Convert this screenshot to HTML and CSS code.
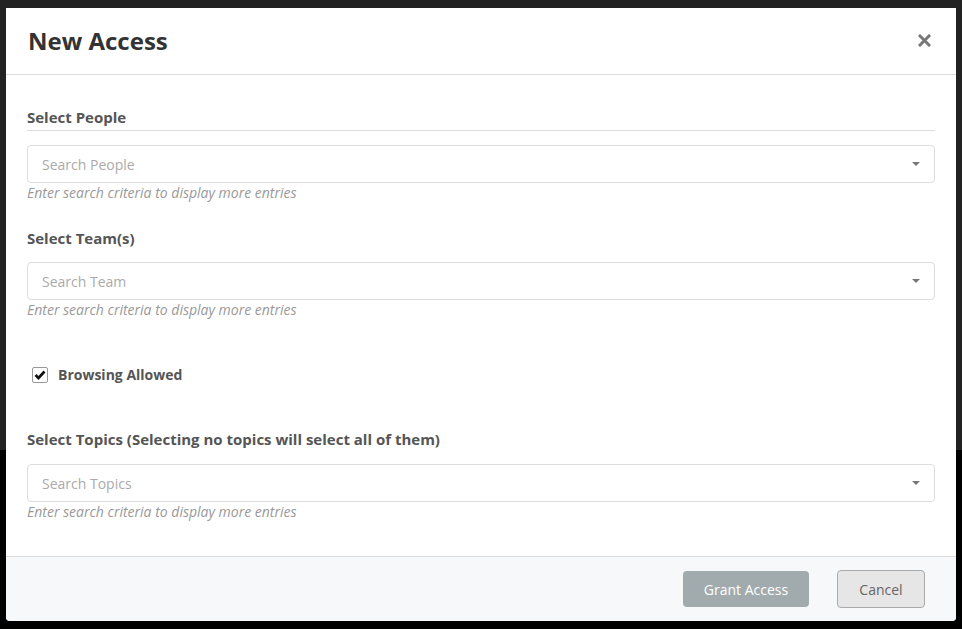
FILE: index.html
```html
<!DOCTYPE html>
<html>
<head>
  <title>New Access</title>
  <meta name="viewport" content="width=device-width, initial-scale=1">
  <link rel="stylesheet" href="styles.css">
</head>
<body>
  <!-- Backdrop behind the dialog -->
  <div class="backdrop">
    <div class="modal">

      <!-- Header -->
      <div class="modal-header">
        <h2 class="modal-title">New Access</h2>
        <button class="close-btn" aria-label="Close">
          <svg width="13" height="13" viewBox="0 0 13 13">
            <path d="M2 2 L11 11 M11 2 L2 11" stroke="#777" stroke-width="3" stroke-linecap="square"/>
          </svg>
        </button>
      </div>

      <!-- Body -->
      <div class="modal-body">
        <div class="form-group">
          <label class="group-label underlined">Select People</label>
          <div class="select-box">
            <span class="placeholder">Search People</span>
            <span class="caret"></span>
          </div>
          <div class="help">Enter search criteria to display more entries</div>
        </div>

        <div class="form-group">
          <label class="group-label">Select Team(s)</label>
          <div class="select-box">
            <span class="placeholder">Search Team</span>
            <span class="caret"></span>
          </div>
          <div class="help">Enter search criteria to display more entries</div>
        </div>

        <div class="check-row">
          <span class="checkbox">
            <svg width="12" height="10" viewBox="0 0 12 10">
              <path d="M1.5 5 L4.5 8 L10.5 1.5" fill="none" stroke="#111" stroke-width="2.6"/>
            </svg>
          </span>
          <span class="check-label">Browsing Allowed</span>
        </div>

        <div class="form-group">
          <label class="group-label topics">Select Topics (Selecting no topics will select all of them)</label>
          <div class="select-box">
            <span class="placeholder">Search Topics</span>
            <span class="caret"></span>
          </div>
          <div class="help">Enter search criteria to display more entries</div>
        </div>
      </div>

      <!-- Footer -->
      <div class="modal-footer">
        <button class="btn btn-grant">Grant Access</button>
        <button class="btn btn-cancel">Cancel</button>
      </div>

    </div>
  </div>
</body>
</html>
```

FILE: styles.css
```css
/* Page and backdrop */
body {
  margin: 0;
  font-family: "Open Sans", "Liberation Sans", sans-serif;
  background: #000;
}

.backdrop {
  height: 629px;
  padding-top: 8px;
  box-sizing: border-box;
  background: linear-gradient(#222 0, #222 450px, #000 450px);
}

/* The dialog */
.modal {
  margin-left: 6px;
  width: 950px;
  height: 613px;
  background: #fff;
  border-radius: 0 0 4px 4px;
  display: flex;
  flex-direction: column;
  overflow: hidden;
}

.modal-header {
  height: 66px;
  flex-shrink: 0;
  border-bottom: 1px solid #dcdcdc;
  display: flex;
  align-items: center;
  justify-content: space-between;
  padding: 0 25px 0 22px;
}

.modal-title {
  margin: 0 0 1px 0;
  font-size: 24px;
  font-weight: 700;
  color: #333;
}

.close-btn {
  background: none;
  border: none;
  padding: 0;
  margin-top: -2px;
  cursor: pointer;
  display: flex;
}

.modal-body {
  flex: 1;
  padding: 32px 21px 0 21px;
}

/* Form groups */
.form-group {
  margin-bottom: 25px;
}

.group-label {
  display: block;
  font-size: 15px;
  font-weight: 700;
  color: #555;
  line-height: 20px;
  margin-bottom: 14px;
}

.group-label.underlined {
  padding-bottom: 3px;
  border-bottom: 1px solid #ddd;
}

.group-label.topics {
  margin-bottom: 15px;
}

.select-box {
  height: 38px;
  box-sizing: border-box;
  border: 1px solid #ddd;
  border-radius: 4px;
  display: flex;
  align-items: center;
  justify-content: space-between;
  padding: 0 14px 0 14px;
}

.placeholder {
  font-size: 14px;
  color: #aaa;
}

.caret {
  width: 0;
  height: 0;
  border-left: 4px solid transparent;
  border-right: 4px solid transparent;
  border-top: 4px solid #777;
}

.help {
  font-size: 14px;
  font-style: italic;
  color: #999;
  line-height: 20px;
}

/* Checkbox row */
.check-row {
  display: flex;
  align-items: center;
  margin: 45px 0 45px 5px;
}

.checkbox {
  width: 16px;
  height: 16px;
  box-sizing: border-box;
  border: 1px solid #999;
  border-radius: 2px;
  display: flex;
  align-items: center;
  justify-content: center;
  margin-right: 10px;
}

.check-label {
  font-size: 14px;
  font-weight: 700;
  color: #555;
}

/* Footer */
.modal-footer {
  height: 64px;
  flex-shrink: 0;
  border-top: 1px solid #dcdcdc;
  background: #f7f8fa;
  display: flex;
  align-items: center;
  justify-content: flex-end;
  gap: 28px;
  padding-right: 31px;
}

.btn {
  font-family: "Open Sans", "Liberation Sans", sans-serif;
  font-size: 14px;
  border-radius: 4px;
  cursor: pointer;
}

.btn-grant {
  width: 126px;
  height: 36px;
  background: #a1abae;
  color: #fff;
  border: none;
}

.btn-cancel {
  width: 88px;
  height: 38px;
  background: #e6e6e6;
  color: #666;
  border: 1px solid #aaa;
}
```
